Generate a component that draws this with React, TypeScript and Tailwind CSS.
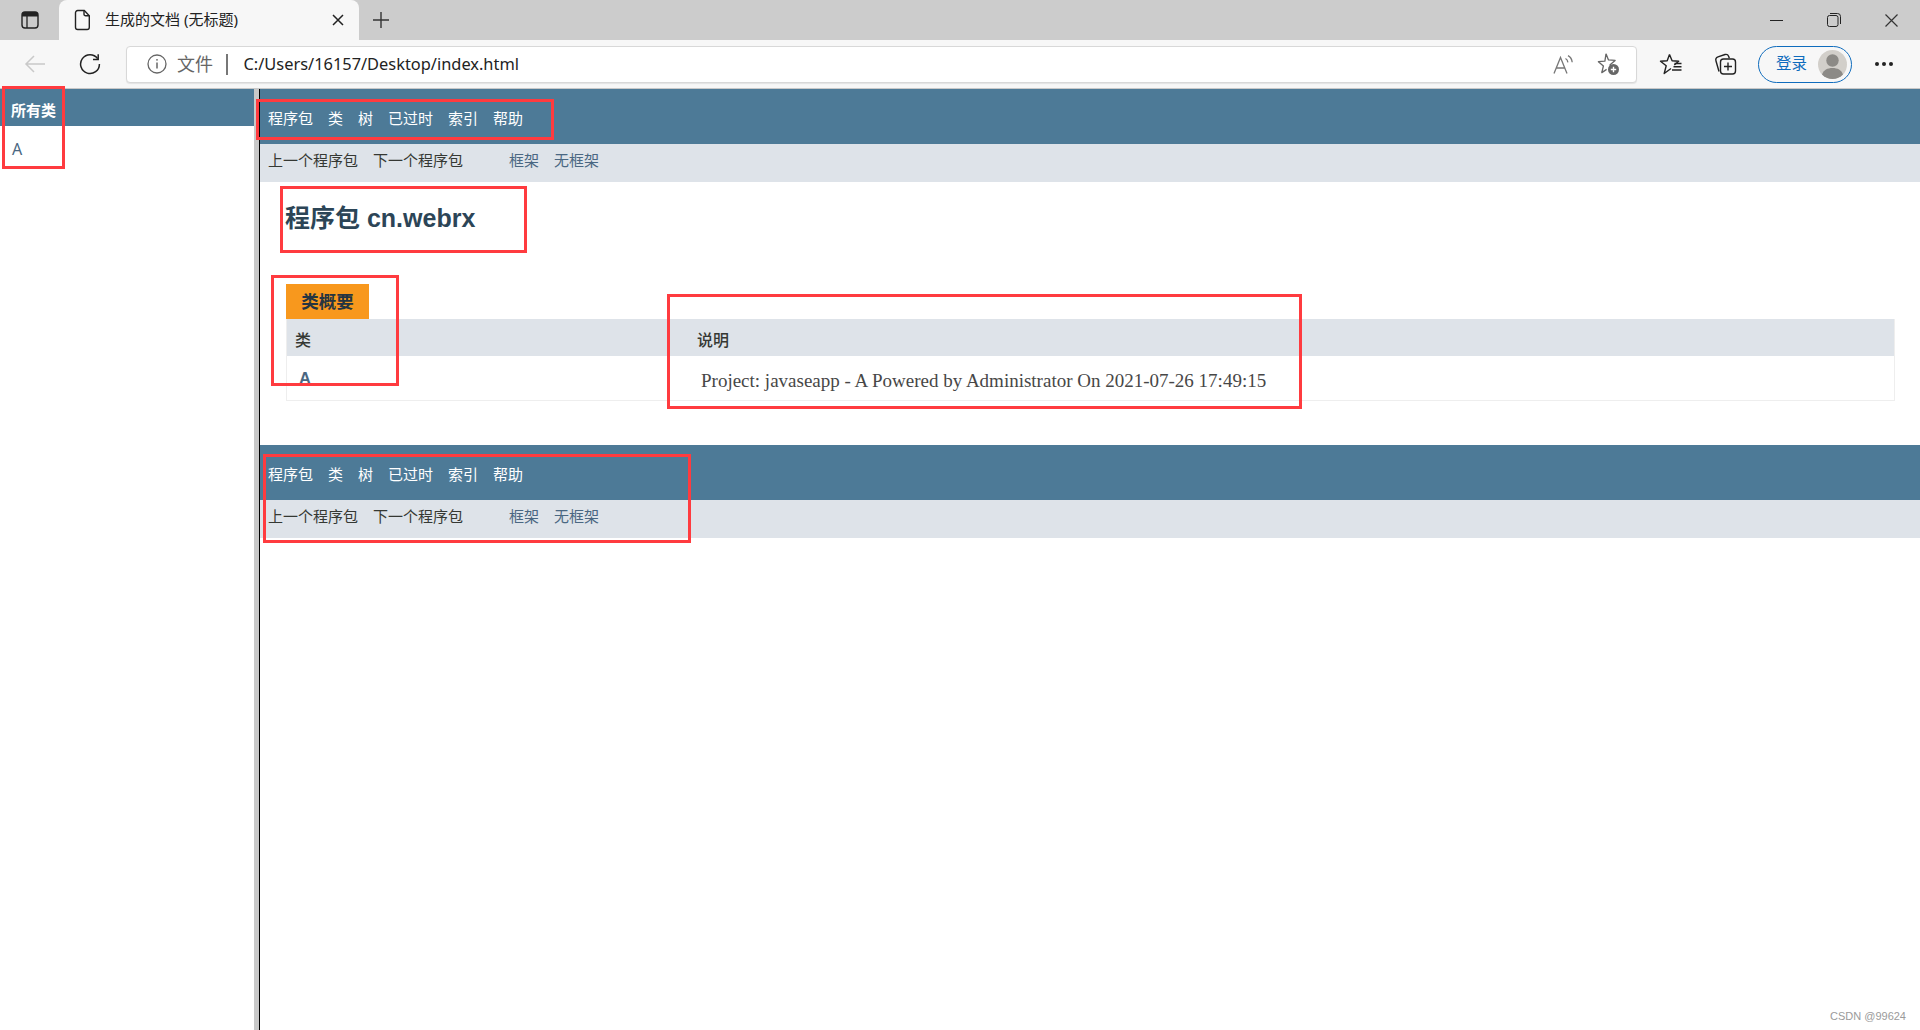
const navItems = ["程序包", "类", "树", "已过时", "索引", "帮助"];

function TopNav() {
  return (
    <div className="h-[55px] bg-[#4d7a97] flex items-center pl-[8px] pt-[6px] gap-[15px] text-[15px] text-white">
      {navItems.map((item) => (
        <span key={item}>{item}</span>
      ))}
    </div>
  );
}

function SubNav() {
  return (
    <div className="h-[38px] bg-[#dee3e9] flex items-center pl-[8px] pb-[3px] text-[15px] text-[#353833]">
      <span>上一个程序包</span>
      <span className="ml-[15px]">下一个程序包</span>
      <span className="ml-[46px] text-[#4a6782]">框架</span>
      <span className="ml-[15px] text-[#4a6782]">无框架</span>
    </div>
  );
}

function PanelIcon() {
  return (
    <svg width="20" height="20" viewBox="0 0 20 20" fill="none">
      <rect x="2" y="2" width="16" height="16" rx="3" stroke="#222" strokeWidth="1.4" />
      <path d="M2 5a3 3 0 0 1 3-3h10a3 3 0 0 1 3 3v1.500H2z" fill="#222" />
      <path d="M7 6v12" stroke="#222" strokeWidth="1.3" />
    </svg>
  );
}

function DocIcon() {
  return (
    <svg width="18" height="22" viewBox="0 0 18 22" fill="none" stroke="#222" strokeWidth="1.4">
      <path d="M3.700 1.500h6.600l5 5.200v11.600a2.200 2.200 0 0 1-2.200 2.200H3.700a2.200 2.200 0 0 1-2.200-2.200V3.700a2.200 2.200 0 0 1 2.200-2.200z" />
      <path d="M10 1.500v3.700a1.600 1.600 0 0 0 1.600 1.600h3.700" />
    </svg>
  );
}

function BackIcon() {
  return (
    <svg width="22" height="20" viewBox="0 0 22 20" fill="none" stroke="#c9c9c9" strokeWidth="1.5">
      <path d="M21 10H2M10 2l-8 8 8 8" />
    </svg>
  );
}

function ReloadIcon() {
  return (
    <svg width="22" height="22" viewBox="0 0 22 22" fill="none" stroke="#222" strokeWidth="1.5">
      <path d="M18.600 5.600A9.400 9.400 0 1 0 20.400 11" />
      <path d="M19.200 1.200v5.200h-5.200" />
    </svg>
  );
}

function InfoIcon() {
  return (
    <svg width="20" height="20" viewBox="0 0 20 20" fill="none" stroke="#666" strokeWidth="1.3">
      <circle cx="10" cy="10" r="9" />
      <path d="M10 8.600v6" strokeWidth="1.5" />
      <circle cx="10" cy="5.800" r="0.900" fill="#666" stroke="none" />
    </svg>
  );
}

function ReadAloudIcon() {
  return (
    <svg width="22" height="22" viewBox="0 0 22 22" fill="none" stroke="#777" strokeWidth="1.3">
      <path d="M1 20.500L7.500 4.500l6.500 16M3.400 15h8.200" />
      <path d="M12.500 5.500c1.400.8 2.200 2.200 2.400 3.800M15 2.600c2.400 1.300 3.900 3.700 4.200 6.600" />
    </svg>
  );
}

function StarPlusIcon() {
  return (
    <svg width="24" height="24" viewBox="0 0 24 24" fill="none">
      <path
        d="M10 1.800l2.500 6.100 6.600.5-5 4.300 1.300 4.300M10.600 17.400l-4.800 3.200 1.600-6.600-5-4.300 6.500-.5L10 1.800"
        stroke="#666"
        strokeWidth="1.3"
        strokeLinejoin="round"
      />
      <circle cx="17.500" cy="17.500" r="5.500" fill="#666" />
      <path d="M17.500 14.800v5.400M14.800 17.500h5.400" stroke="#fff" strokeWidth="1.4" />
    </svg>
  );
}

function FavoritesIcon() {
  return (
    <svg width="24" height="22" viewBox="0 0 24 22" fill="none" stroke="#222" strokeWidth="1.4">
      <path d="M10.500 1.500l2.600 6.300 6.600.5-4.400 3.700M12 15.500l-6.800 5 2-7.700-5.700-4.500 6.700-.5 2.300-6.300" strokeLinejoin="round" />
      <path d="M15.500 10.500h7M14.500 13.800h8M13 17h9.500" />
    </svg>
  );
}

function CollectionsIcon() {
  return (
    <svg width="24" height="24" viewBox="0 0 24 24" fill="none" stroke="#222" strokeWidth="1.4">
      <path d="M6 19.500L3 9c-.6-2 0-3.500 2-4.200L12 2.500c1.600-.4 3 .2 3.600 1.800l.7 2" />
      <rect x="7.500" y="7" width="15" height="15" rx="3" />
      <path d="M15 10.500v8M11 14.500h8" />
    </svg>
  );
}

function Avatar() {
  return (
    <svg width="29" height="29" viewBox="0 0 29 29">
      <circle cx="14.500" cy="14.500" r="14.500" fill="#d2cfca" />
      <circle cx="14.500" cy="10.500" r="6.200" fill="#8c8a86" />
      <path d="M4 24.500c1.500-4.500 5.500-6.500 10.500-6.500s9 2 10.500 6.500a14.500 14.500 0 0 1-21 0z" fill="#8c8a86" />
    </svg>
  );
}

function BrowserChrome() {
  return (
    <div className="font-['Noto_Sans','Noto_Sans_CJK_SC',sans-serif]">
      <div className="h-[40px] bg-[#cccccc] flex">
        <div className="w-[59px] flex items-center justify-center">
          <PanelIcon />
        </div>
        <div className="w-[300px] bg-[#f7f7f7] rounded-t-lg flex items-center pl-[15px] pr-[15px]">
          <DocIcon />
          <span className="ml-[13px] mb-[2px] text-[15px] text-[#222]">生成的文档 (无标题)</span>
          <svg className="ml-auto" width="12" height="12" viewBox="0 0 12 12" stroke="#222" strokeWidth="1.5">
            <path d="M1 1l10 10M11 1L1 11" />
          </svg>
        </div>
        <div className="w-[44px] flex items-center justify-center">
          <svg width="18" height="18" viewBox="0 0 18 18" stroke="#333" strokeWidth="1.4">
            <path d="M9 1v16M1 9h16" />
          </svg>
        </div>
        <div className="ml-auto flex items-center pr-[22px] gap-[44px]">
          <svg width="13" height="13" viewBox="0 0 13 13" stroke="#222">
            <path d="M0 6.500h13" />
          </svg>
          <svg width="14" height="14" viewBox="0 0 14 14" fill="none" stroke="#222">
            <rect x="0.500" y="2.500" width="10.500" height="11" rx="2" />
            <path d="M3 .5h7.500a3 3 0 0 1 3 3V11" />
          </svg>
          <svg width="13" height="13" viewBox="0 0 13 13" stroke="#333" strokeWidth="1.2">
            <path d="M.5.5l12 12M12.500.5l-12 12" />
          </svg>
        </div>
      </div>
      <div className="h-[49px] bg-[#f7f7f7] border-b border-[#c8c8c8] flex items-center">
        <div className="w-[126px] flex items-center pl-[24px] gap-[33px]">
          <BackIcon />
          <ReloadIcon />
        </div>
        <div className="w-[1511px] h-[37px] bg-white rounded-[4px] border border-[#d8d8d8] flex items-center pl-[20px] pr-[16px] shadow-[0_1px_1px_rgba(0,0,0,0.08)]">
          <InfoIcon />
          <span className="ml-[10px] text-[18px] text-[#666]">文件</span>
          <span className="ml-[13px] w-[1.500px] h-[21px] bg-[#777]" />
          <span className="ml-[16px] text-[16.400px] text-[#222]">C:/Users/16157/Desktop/index.html</span>
          <div className="ml-auto flex items-center gap-[21px]">
            <ReadAloudIcon />
            <StarPlusIcon />
          </div>
        </div>
        <div className="ml-[22px]">
          <FavoritesIcon />
        </div>
        <div className="ml-[30px]">
          <CollectionsIcon />
        </div>
        <div className="ml-[21px] w-[94px] h-[37px] rounded-full border-[1.500px] border-[#0f6cbd] flex items-center pl-[17px] pr-[4px] justify-between">
          <span className="text-[15.500px] text-[#0f6cbd]">登录</span>
          <Avatar />
        </div>
        <div className="ml-[23px] flex gap-[3.500px]">
          <span className="w-[3.500px] h-[3.500px] rounded-full bg-[#222]" />
          <span className="w-[3.500px] h-[3.500px] rounded-full bg-[#222]" />
          <span className="w-[3.500px] h-[3.500px] rounded-full bg-[#222]" />
        </div>
      </div>
    </div>
  );
}

const redBoxes = [
  "left-[2px] top-[86px] w-[63px] h-[83px]",
  "left-[256px] top-[99px] w-[298px] h-[41px]",
  "left-[280px] top-[186px] w-[247px] h-[67px]",
  "left-[271px] top-[275px] w-[128px] h-[111px]",
  "left-[667px] top-[294px] w-[635px] h-[115px]",
  "left-[263px] top-[454px] w-[428px] h-[89px]",
];

export default function App() {
  return (
    <div className="relative w-[1920px] h-[1030px] overflow-hidden bg-white flex flex-col font-['Liberation_Sans','Noto_Sans_CJK_SC',sans-serif]">
      <BrowserChrome />
      <div className="flex flex-1">
        <aside className="w-[254px]">
          <div className="h-[37px] bg-[#4d7a97] flex items-center pl-[11px] pt-[7px] text-[15px] font-bold text-white">所有类</div>
          <div className="pl-[12px] pt-[13px] text-[16px] leading-[20px] text-[#4a6782] font-['Noto_Sans',sans-serif]">A</div>
        </aside>
        <div className="w-[6px] bg-[#c8c8c8] border-r border-black" />
        <main className="flex-1">
          <TopNav />
          <SubNav />
          <h1 className="pl-[25px] pt-[21px] text-[25px] leading-[30px] font-bold text-[#2c4557]">程序包 cn.webrx</h1>
          <section className="ml-[26px] mr-[25px] mt-[51px]">
            <div className="w-[83px] h-[35px] bg-[#f8981d] flex items-center justify-center pt-[2px] text-[17.500px] font-bold text-[#253441]">类概要</div>
            <div className="border-x border-b border-[#eeeeee]">
              <div className="h-[37px] bg-[#dee3e9] flex items-center text-[16px] font-medium text-[#353833] pt-[7px]">
                <div className="w-[410px] pl-[8px]">类</div>
                <div>说明</div>
              </div>
              <div className="h-[44px] flex">
                <div className="w-[410px] pl-[12px] pt-[13px] text-[16.500px] leading-[18px] font-bold text-[#4a6782]">A</div>
                <div className="pl-[4px] pt-[13px] text-[19px] leading-[24px] text-[#474747] font-['Liberation_Serif',serif]">
                  Project: javaseapp - A Powered by Administrator On 2021-07-26 17:49:15
                </div>
              </div>
            </div>
          </section>
          <div className="mt-[44px]">
            <TopNav />
            <SubNav />
          </div>
        </main>
      </div>
      {redBoxes.map((box) => (
        <div key={box} className={`absolute border-[3px] border-[#ff3b3f] ${box}`} />
      ))}
      <span className="absolute left-[1830px] top-[1009px] text-[11px] leading-[14px] text-[#9a9a9a]">CSDN @99624</span>
    </div>
  );
}
